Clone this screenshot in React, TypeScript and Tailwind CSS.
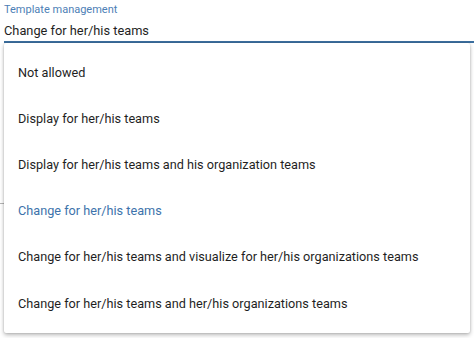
import React from "react";

const OPTIONS = [
  "Not allowed",
  "Display for her/his teams",
  "Display for her/his teams and his organization teams",
  "Change for her/his teams",
  "Change for her/his teams and visualize for her/his organizations teams",
  "Change for her/his teams and her/his organizations teams",
];

const SELECTED = "Change for her/his teams";

export default function App() {
  return (
    <div
      className="relative h-[338px] w-[474px] overflow-hidden bg-white"
      style={{ fontFamily: "Roboto, 'Noto Sans', sans-serif" }}
    >
      {/* Select field */}
      <div className="pl-[4px] pt-[3px]">
        <div className="text-[11px] leading-[14px] text-[#4d80b6]">Template management</div>
        <div className="border-b-2 border-[#3c6f9f] pb-[2px] pt-[6px] text-[12.8px] leading-[16px] text-[#1f1f1f]">
          {SELECTED}
        </div>
      </div>

      {/* Field underneath, mostly hidden by the menu */}
      <div className="mt-[160px] h-px w-[40px] bg-[#b5b5b5]" />

      {/* Dropdown menu */}
      <div className="absolute left-[4px] top-[43px] w-[466px] rounded-[2px] bg-white pb-[7px] pt-[6px] shadow-[0_2px_4px_rgba(0,0,0,0.28),0_0_2px_rgba(0,0,0,0.18)]">
        {OPTIONS.map((opt) => (
          <div
            key={opt}
            className={`flex h-[46.2px] items-center pl-[14px] text-[12.7px] ${
              opt === SELECTED ? "text-[#3d73ab]" : "text-[#1f1f1f]"
            }`}
          >
            {opt}
          </div>
        ))}
      </div>
    </div>
  );
}
